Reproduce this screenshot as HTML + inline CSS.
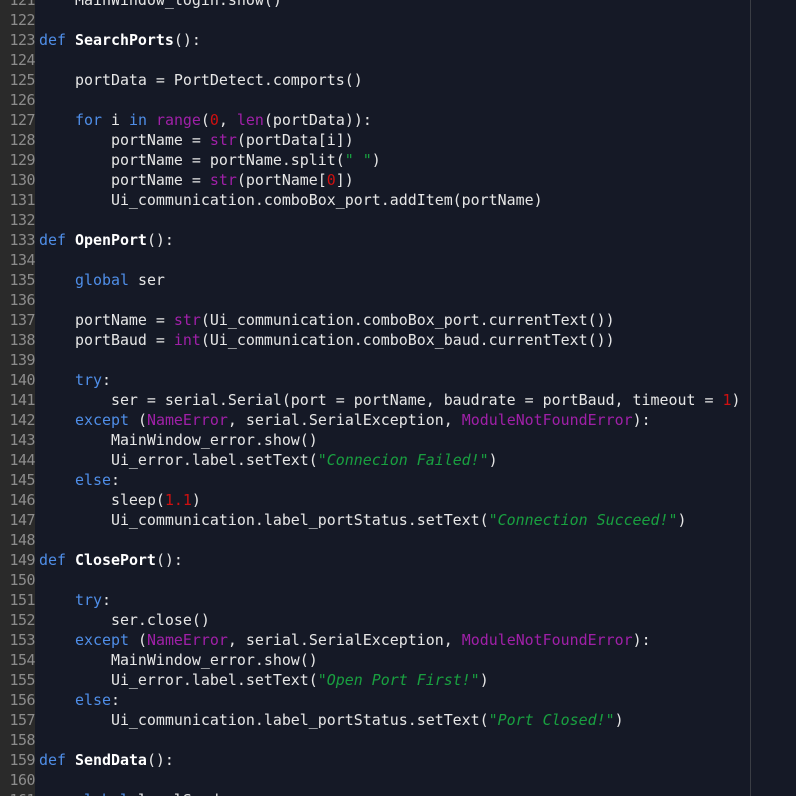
<!DOCTYPE html>
<html><head><style>
html,body{margin:0;width:796px;height:796px;overflow:hidden;}
body{background:#151926;font-family:"DejaVu Sans Mono","Liberation Mono",monospace;font-size:14.95px;position:relative;}
#g{position:absolute;left:0;top:0;width:35px;height:796px;background:#2a2a2a;}
#v{position:absolute;left:750px;top:0;width:1px;height:796px;background:#3a3d44;}
#c{position:absolute;top:-10px;left:0;}
.l{height:20px;line-height:20px;white-space:pre;color:#e6e6e6;position:relative;}
.n{position:absolute;left:0;width:35px;text-align:right;color:#8c8c8c;letter-spacing:-0.5px;}
.t{position:absolute;left:39px;}
.k{color:#4f8ee8}.b{color:#a020a8}.d{color:#d01010}.s{color:#19a040;font-style:italic}.f{font-weight:bold;color:#fff}
</style></head><body>
<div id="g"></div><div id="v"></div>
<div id="c">
<div class="l"><span class="n">121</span><span class="t">    MainWindow_login.show()</span></div>
<div class="l"><span class="n">122</span><span class="t"></span></div>
<div class="l"><span class="n">123</span><span class="t"><span class="k">def</span> <span class="f">SearchPorts</span>():</span></div>
<div class="l"><span class="n">124</span><span class="t"></span></div>
<div class="l"><span class="n">125</span><span class="t">    portData = PortDetect.comports()</span></div>
<div class="l"><span class="n">126</span><span class="t"></span></div>
<div class="l"><span class="n">127</span><span class="t">    <span class="k">for</span> i <span class="k">in</span> <span class="b">range</span>(<span class="d">0</span>, <span class="b">len</span>(portData)):</span></div>
<div class="l"><span class="n">128</span><span class="t">        portName = <span class="b">str</span>(portData[i])</span></div>
<div class="l"><span class="n">129</span><span class="t">        portName = portName.split(<span class="s">" "</span>)</span></div>
<div class="l"><span class="n">130</span><span class="t">        portName = <span class="b">str</span>(portName[<span class="d">0</span>])</span></div>
<div class="l"><span class="n">131</span><span class="t">        Ui_communication.comboBox_port.addItem(portName)</span></div>
<div class="l"><span class="n">132</span><span class="t"></span></div>
<div class="l"><span class="n">133</span><span class="t"><span class="k">def</span> <span class="f">OpenPort</span>():</span></div>
<div class="l"><span class="n">134</span><span class="t"></span></div>
<div class="l"><span class="n">135</span><span class="t">    <span class="k">global</span> ser</span></div>
<div class="l"><span class="n">136</span><span class="t"></span></div>
<div class="l"><span class="n">137</span><span class="t">    portName = <span class="b">str</span>(Ui_communication.comboBox_port.currentText())</span></div>
<div class="l"><span class="n">138</span><span class="t">    portBaud = <span class="b">int</span>(Ui_communication.comboBox_baud.currentText())</span></div>
<div class="l"><span class="n">139</span><span class="t"></span></div>
<div class="l"><span class="n">140</span><span class="t">    <span class="k">try</span>:</span></div>
<div class="l"><span class="n">141</span><span class="t">        ser = serial.Serial(port = portName, baudrate = portBaud, timeout = <span class="d">1</span>)</span></div>
<div class="l"><span class="n">142</span><span class="t">    <span class="k">except</span> (<span class="b">NameError</span>, serial.SerialException, <span class="b">ModuleNotFoundError</span>):</span></div>
<div class="l"><span class="n">143</span><span class="t">        MainWindow_error.show()</span></div>
<div class="l"><span class="n">144</span><span class="t">        Ui_error.label.setText(<span class="s">"Connecion Failed!"</span>)</span></div>
<div class="l"><span class="n">145</span><span class="t">    <span class="k">else</span>:</span></div>
<div class="l"><span class="n">146</span><span class="t">        sleep(<span class="d">1.1</span>)</span></div>
<div class="l"><span class="n">147</span><span class="t">        Ui_communication.label_portStatus.setText(<span class="s">"Connection Succeed!"</span>)</span></div>
<div class="l"><span class="n">148</span><span class="t"></span></div>
<div class="l"><span class="n">149</span><span class="t"><span class="k">def</span> <span class="f">ClosePort</span>():</span></div>
<div class="l"><span class="n">150</span><span class="t"></span></div>
<div class="l"><span class="n">151</span><span class="t">    <span class="k">try</span>:</span></div>
<div class="l"><span class="n">152</span><span class="t">        ser.close()</span></div>
<div class="l"><span class="n">153</span><span class="t">    <span class="k">except</span> (<span class="b">NameError</span>, serial.SerialException, <span class="b">ModuleNotFoundError</span>):</span></div>
<div class="l"><span class="n">154</span><span class="t">        MainWindow_error.show()</span></div>
<div class="l"><span class="n">155</span><span class="t">        Ui_error.label.setText(<span class="s">"Open Port First!"</span>)</span></div>
<div class="l"><span class="n">156</span><span class="t">    <span class="k">else</span>:</span></div>
<div class="l"><span class="n">157</span><span class="t">        Ui_communication.label_portStatus.setText(<span class="s">"Port Closed!"</span>)</span></div>
<div class="l"><span class="n">158</span><span class="t"></span></div>
<div class="l"><span class="n">159</span><span class="t"><span class="k">def</span> <span class="f">SendData</span>():</span></div>
<div class="l"><span class="n">160</span><span class="t"></span></div>
<div class="l"><span class="n">161</span><span class="t">    <span class="k">global</span> levelSend</span></div>
</div>
</body></html>
